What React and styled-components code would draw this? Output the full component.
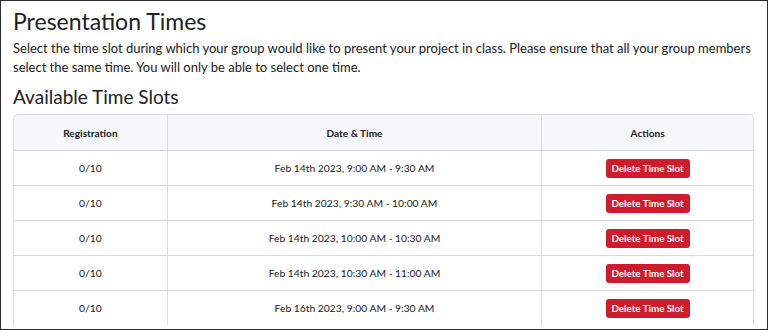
import React from 'react';
import styled, { createGlobalStyle } from 'styled-components';

const GlobalStyle = createGlobalStyle`
  html, body {
    margin: 0;
    padding: 0;
    background: #ffffff;
  }
  body {
    font-family: Lato, "Noto Sans", sans-serif;
  }
`;

const Frame = styled.div`
  box-sizing: border-box;
  width: 768px;
  height: 330px;
  border: 1.5px solid #2b2b2b;
  overflow: hidden;
  padding: 4px 14px 0 12px;
  background: #fff;
`;

const Title = styled.h1`
  margin: 0;
  font-size: 23px;
  font-weight: 400;
  line-height: 32px;
  color: #202122;
`;

const Intro = styled.p`
  margin: 2px 0 0;
  font-size: 13px;
  line-height: 19px;
  color: #202122;
`;

const SubTitle = styled.h2`
  margin: 7px 0 0;
  font-size: 19px;
  font-weight: 400;
  line-height: 26px;
  color: #202122;
`;

const Table = styled.table`
  margin-top: 4px;
  width: 741px;
  border-collapse: separate;
  border-spacing: 0;
  border: 1px solid #d8dbe0;
  border-bottom: none;
  border-radius: 5px 5px 0 0;
  font-size: 10.3px;
  color: #202122;
`;

const HeadCell = styled.th`
  height: 35px;
  padding: 0;
  background: #f5f7fc;
  font-weight: 700;
  font-size: 10.1px;
  text-align: center;
  border-left: ${p => (p.$first ? 'none' : '1px solid #d8dbe0')};
  width: ${p => p.$w}px;
  &:first-child { border-top-left-radius: 5px; }
  &:last-child { border-top-right-radius: 5px; }
`;

const Cell = styled.td`
  height: 34px;
  padding: 0;
  text-align: center;
  border-top: 1px solid #d8dbe0;
  border-left: ${p => (p.$first ? 'none' : '1px solid #d8dbe0')};
`;

const DeleteButton = styled.button`
  font-family: Lato, "Noto Sans", sans-serif;
  background: #cd1c2c;
  color: #fff;
  border: none;
  border-radius: 3px;
  font-weight: 700;
  font-size: 9.8px;
  height: 19px;
  width: 84px;
  padding: 0;
  cursor: pointer;
`;

const slots = [
  'Feb 14th 2023, 9:00 AM - 9:30 AM',
  'Feb 14th 2023, 9:30 AM - 10:00 AM',
  'Feb 14th 2023, 10:00 AM - 10:30 AM',
  'Feb 14th 2023, 10:30 AM - 11:00 AM',
  'Feb 16th 2023, 9:00 AM - 9:30 AM',
];

export default function App() {
  return (
    <>
      <GlobalStyle />
      <Frame>
        <Title>Presentation Times</Title>
        <Intro>
          Select the time slot during which your group would like to present your project in class. Please ensure that all your group members select the same time. You will only be able to select one time.
        </Intro>
        <SubTitle>Available Time Slots</SubTitle>
        <Table>
          <thead>
            <tr>
              <HeadCell $first $w={153}>Registration</HeadCell>
              <HeadCell $w={374}>Date &amp; Time</HeadCell>
              <HeadCell $w={211}>Actions</HeadCell>
            </tr>
          </thead>
          <tbody>
            {slots.map(s => (
              <tr key={s}>
                <Cell $first>0/10</Cell>
                <Cell>{s}</Cell>
                <Cell>
                  <DeleteButton>Delete Time Slot</DeleteButton>
                </Cell>
              </tr>
            ))}
          </tbody>
        </Table>
      </Frame>
    </>
  );
}
